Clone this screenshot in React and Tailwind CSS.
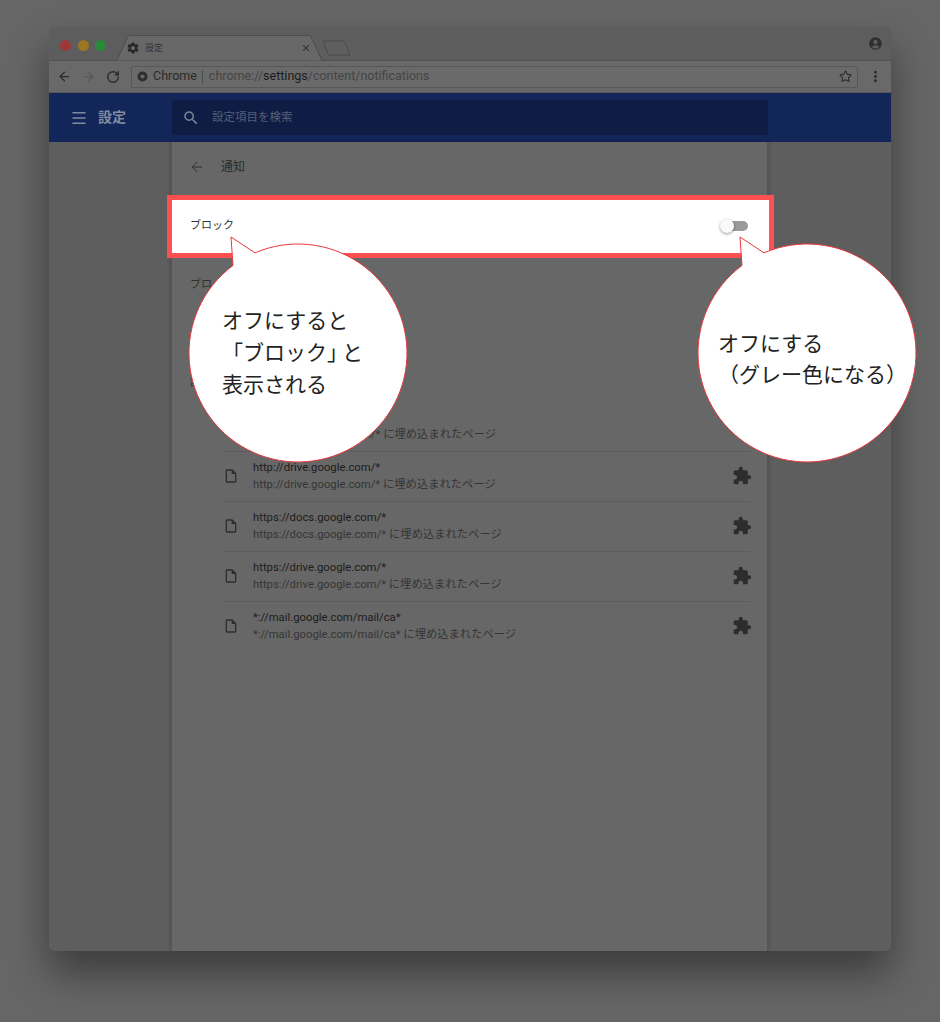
import { ArrowLeft, ArrowRight, RotateCw, Star, Menu, X } from 'lucide-react';
import { MdSettings, MdAccountCircle, MdMoreVert, MdExtension, MdOutlineInsertDriveFile, MdSearch } from 'react-icons/md';

const font = 'font-["Roboto","Noto_Sans_CJK_JP",sans-serif]';

const rows = [
    { url: 'http://docs.google.com/*' },
    { url: 'http://drive.google.com/*' },
    { url: 'https://docs.google.com/*' },
    { url: 'https://drive.google.com/*' },
    { url: '*://mail.google.com/mail/ca*' },
];

function Row({ url }) {
    return (
        <div className="h-[50px] pb-[2px] flex items-center border-b border-[#5c5c5c] last:border-b-0">
            <MdOutlineInsertDriveFile className="w-[16px] h-[16px] text-[#2e2e2e]" />
            <div className="ml-[14px] flex-1 text-[11.3px] leading-[17px]">
                <div className="text-[#1c1c1c]">{url}</div>
                <div className="text-[#353535]">{url} に埋め込まれたページ</div>
            </div>
            <MdExtension className="w-[20px] h-[20px] mr-[-1px] text-[#2d2d2d]" />
        </div>
    );
}

function Bubble({ className, children }) {
    return (
        <div className={`absolute w-[222px] h-[228px] ${className}`}>
            <svg width="222" height="228" viewBox="0 0 222 228" className="absolute left-0 top-0">
                <path
                    d="M43 1 L67 16.840 A109 109 0 1 1 45 29.500 Z"
                    fill="#fff"
                    stroke="#e8383d"
                    strokeWidth="1"
                />
            </svg>
            <div className="relative font-['Noto_Sans_CJK_JP',sans-serif] text-[21px] leading-[32px] text-[#222]">{children}</div>
        </div>
    );
}

function App() {
    return (
        <div className={`relative w-[940px] h-[1022px] overflow-hidden bg-[#666666] pl-[49px] pt-[27px] ${font}`}>
            <div className="w-[842px] h-[924px] flex flex-col rounded-[5px] overflow-hidden bg-[#5e5e5e] shadow-[0_22px_40px_rgba(0,0,0,0.42)]">
                {/* Title bar */}
                <div className="h-[34px] shrink-0 flex items-end relative bg-[#5d5d5d] border-b border-[#515151]">
                    <div className="flex gap-[6.5px] absolute left-[11px] top-[13px]">
                        <span className="w-[11px] h-[11px] rounded-full bg-[#9c3836]" />
                        <span className="w-[11px] h-[11px] rounded-full bg-[#9c7622]" />
                        <span className="w-[11px] h-[11px] rounded-full bg-[#2a8a3c]" />
                    </div>
                    <div className="relative ml-[65px] w-[211px] h-[26px] mb-[-1px] flex items-center">
                        <svg width="211" height="26" className="absolute left-0 top-0">
                            <path d="M0 25.500 H3 L14 1 Q14.500 0.500 16 0.500 H194 Q196 0.500 197 2 L208 25.500 H211" fill="#686868" stroke="#4d4d4d" />
                        </svg>
                        <MdSettings className="relative ml-[12px] w-[14px] h-[14px] text-[#262626]" />
                        <span className="relative ml-[5px] pt-[2px] text-[9px] text-[#333]">設定</span>
                        <X className="relative ml-[138px] w-[10px] h-[10px] text-[#2a2a2a]" strokeWidth={2.500} />
                    </div>
                    <svg width="30" height="17" className="mb-[3px] ml-[-3px]">
                        <path d="M1 1 H20 Q22 1 23 3 L28 15 H8 Q6.500 15 6 14 Z" fill="#5f5f5f" stroke="#4b4b4b" />
                    </svg>
                    <MdAccountCircle className="absolute right-[8px] top-[9px] w-[15px] h-[15px] text-[#303030]" />
                </div>
                {/* Toolbar */}
                <div className="h-[32px] shrink-0 flex items-center bg-[#696969] border-b border-[#575757]">
                    <ArrowLeft className="ml-[8px] w-[15px] h-[15px] text-[#2d2d2d]" strokeWidth={2} />
                    <ArrowRight className="ml-[9px] w-[15px] h-[15px] text-[#595959]" strokeWidth={2} />
                    <RotateCw className="ml-[10px] w-[14px] h-[14px] text-[#2d2d2d]" strokeWidth={2.500} />
                    <div className="ml-[11px] w-[727px] h-[22px] flex items-center bg-[#6a6a6a] border border-[#575757] rounded-[2px] text-[12.5px]">
                        <svg width="11" height="11" viewBox="0 0 12 12" className="ml-[5px]">
                            <circle cx="6" cy="6" r="5.500" fill="#2e2e2e" />
                            <circle cx="6" cy="6" r="2.300" fill="#666" />
                        </svg>
                        <span className="ml-[5px] text-[#2b2b2b]">Chrome</span>
                        <span className="ml-[5px] w-px h-[14px] bg-[#4d4d4d]" />
                        <span className="ml-[6px] text-[#454545]">chrome://<span className="text-[#1c1c1c]">settings</span>/content/notifications</span>
                        <Star className="ml-auto mr-[5px] w-[13px] h-[13px] text-[#2b2b2b]" strokeWidth={2} />
                    </div>
                    <MdMoreVert className="ml-[9px] w-[17px] h-[17px] text-[#2b2b2b]" />
                </div>
                {/* Blue header */}
                <div className="h-[49px] shrink-0 flex items-center bg-[#13265a]">
                    <Menu className="ml-[21px] w-[18px] h-[18px] text-[#808aa0]" strokeWidth={2} />
                    <span className="ml-[10px] w-[74px] text-[14px] font-bold text-[#808aa0]">設定</span>
                    <div className="w-[596px] h-[35px] flex items-center bg-[#0f1d45] rounded-[2px]">
                        <MdSearch className="ml-[10px] w-[18px] h-[18px] text-[#7d8598]" />
                        <span className="ml-[12px] text-[11.5px] text-[#555f78]">設定項目を検索</span>
                    </div>
                </div>
                {/* Body */}
                <div className="flex-1 flex justify-center">
                    <div className="w-[597px] mr-[1px] bg-[#676767] border-x border-[#555] shadow-[0_0_4px_rgba(0,0,0,0.25)]">
                        <div className="h-[53px] pb-[3px] flex items-center pl-[17px]">
                            <ArrowLeft className="w-[16px] h-[16px] text-[#2f2f2f]" strokeWidth={1.500} />
                            <span className="ml-[16px] text-[12px] text-[#2b2b2b]">通知</span>
                        </div>
                        <div className="h-[63px] ml-[-5px] mr-[-7px] pb-[1px] flex items-center justify-between bg-white border-[5px] border-[#fe5050] pl-[18px] pr-[21px] relative">
                            <span className="text-[11px] text-[#333]">ブロック</span>
                            <div className="relative w-[27px] h-[10px] rounded-full bg-[#9a9a9a]">
                                <span className="absolute left-[-1px] top-[-2px] w-[14px] h-[14px] rounded-full bg-[#fafafa] shadow-[0_1px_3px_rgba(0,0,0,0.4)]" />
                            </div>
                        </div>
                        <div className="pl-[18px] pt-[19px] h-[117px] text-[11px] text-[#2f2f2f]">ブロック</div>
                        <div className="pl-[18px] h-[27px] text-[11px] text-[#2f2f2f]">許可</div>
                        <div className="ml-[51px] mr-[16px]">
                            {rows.map((r) => (
                                <Row key={r.url} url={r.url} />
                            ))}
                        </div>
                    </div>
                </div>
            </div>

            <Bubble className="left-[188px] top-[236px]">
                <div className="pl-[34px] pt-[67px]">
                    <div>オフにすると</div>
                    <div className="whitespace-nowrap">「ブロック<span className="tracking-[-6px]">」</span>と</div>
                    <div>表示される</div>
                </div>
            </Bubble>
            <Bubble className="left-[697px] top-[236px]">
                <div className="pl-[21px] pt-[91px] leading-[31px]">
                    <div>オフにする</div>
                    <div className="whitespace-nowrap">（グレー色になる）</div>
                </div>
            </Bubble>
        </div>
    );
}

export default App;
